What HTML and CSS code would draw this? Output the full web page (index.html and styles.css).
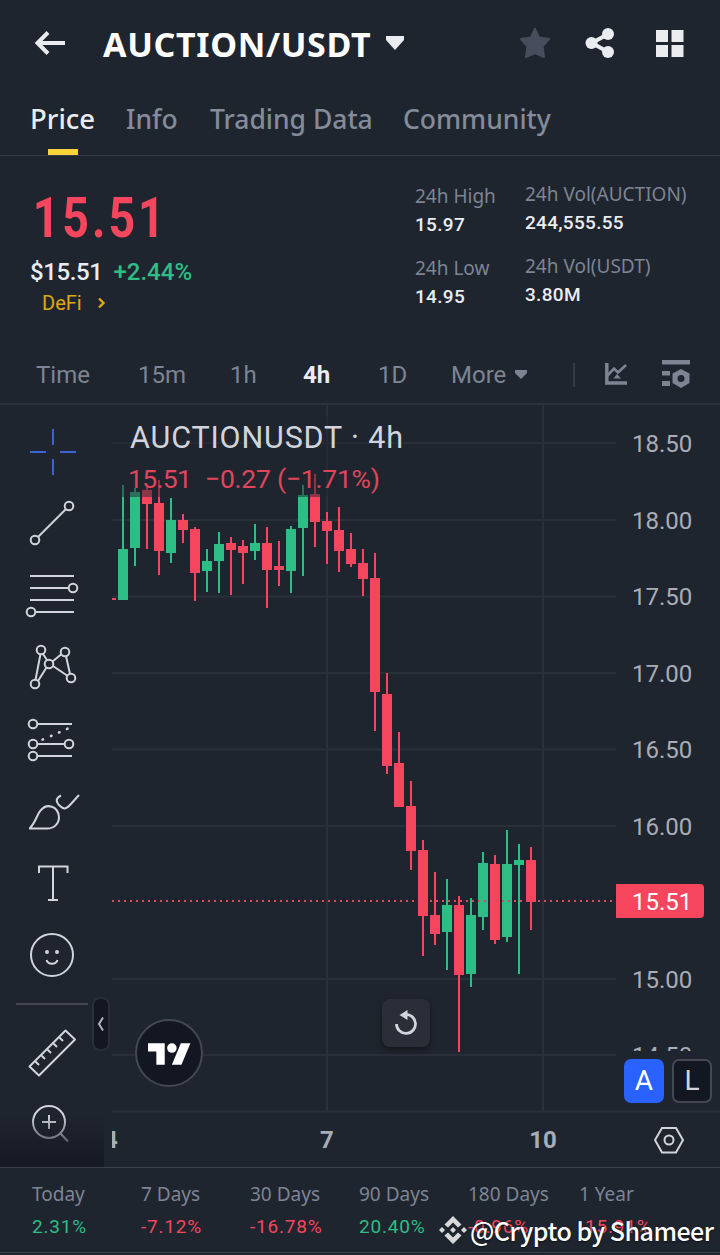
FILE: index.html
```html
<!DOCTYPE html>
<html lang="en">
    <head>
        <meta charset="utf-8">
        <meta name="viewport" content="width=device-width, initial-scale=1.0">
        <title>AUCTION/USDT</title>
        <link rel="stylesheet" href="styles.css">
    </head>
    <body>

        <header class="topbar">
            <svg class="back" width="32" height="26" viewBox="0 0 32 26"><path d="M31 13H4M14 2.500L3.500 13L14 23.500" fill="none" stroke="#eaecef" stroke-width="4"/></svg>
            <h1 class="pair">AUCTION/USDT</h1>
            <svg class="caret" width="20" height="16" viewBox="0 0 20 16"><path d="M1 1H19V5L10 15L1 5Z" fill="#eaecef"/></svg>
            <div class="actions">
                <svg width="32" height="32" viewBox="0 0 32 32"><path d="M16 2L20 10.500L30 12L23.500 19.500L25 30L16 26L7 30L8.500 19.500L2 12L12 10.500Z" fill="#474d5c" stroke="#474d5c" stroke-width="2" stroke-linejoin="round"/></svg>
                <svg width="32" height="32" viewBox="0 0 32 32"><path d="M23 7L7 16L23 25" fill="none" stroke="#eaecef" stroke-width="4"/><circle cx="23" cy="7" r="6" fill="#eaecef"/><circle cx="6.500" cy="16" r="6" fill="#eaecef"/><circle cx="23" cy="25" r="6" fill="#eaecef"/></svg>
                <svg width="28" height="28" viewBox="0 0 28 28"><path d="M0 1H12V13H0ZM15.500 1H27.500V13H15.500ZM0 16H12V28H0ZM15.500 16H27.500V28H15.500Z" fill="#eaecef"/></svg>
            </div>
        </header>

        <nav class="tabs">
            <a class="tab active">Price</a>
            <a class="tab">Info</a>
            <a class="tab">Trading Data</a>
            <a class="tab">Community</a>
        </nav>

        <section class="ticker">
            <div class="last">
                <div class="price">15.51</div>
                <div class="fiat"><span>$15.51</span><span class="change up">+2.44%</span></div>
                <div class="tag">DeFi <svg width="8" height="12" viewBox="0 0 8 12"><path d="M1 1.500L5.500 6L1 10.500" fill="none" stroke="#e0a90b" stroke-width="2.400"/></svg></div>
            </div>
            <dl class="stats">
                <dt>24h High</dt><dd>15.97</dd>
                <dt>24h Low</dt><dd>14.95</dd>
            </dl>
            <dl class="stats volume">
                <dt>24h Vol(AUCTION)</dt><dd>244,555.55</dd>
                <dt>24h Vol(USDT)</dt><dd>3.80M</dd>
            </dl>
        </section>

        <nav class="intervals">
            <span>Time</span>
            <span>15m</span>
            <span>1h</span>
            <span class="selected">4h</span>
            <span>1D</span>
            <span>More <svg width="14" height="11" viewBox="0 0 14 11"><path d="M1 0H13V3L7 9L1 3Z" fill="#7d8493"/></svg></span>
            <i class="split"></i>
            <svg width="24" height="24" viewBox="0 0 24 24" fill="none" stroke="#7d8493" stroke-width="3.500"><path d="M2.800 0V20H23"/><path d="M3 13L10 5.500L14 9.500L22 2" stroke-width="2.600"/><path d="M9.500 15.500L13 11L17 15.500Z" fill="#7d8493" stroke="none"/></svg>
            <svg width="30" height="30" viewBox="1 1 30 30" fill="#7d8493"><path d="M1 1H29V5.500H1ZM1 12H9V16.500H1ZM1 22H9V27H1Z"/><path fill-rule="evenodd" d="M20 10L28.500 14.500V24L20 29L11.500 24V14.500ZM20 16A3.500 3.500 0 1 0 20 23A3.500 3.500 0 1 0 20 16Z"/></svg>
        </nav>

        <main class="chart">
            <aside class="tools">
                <!-- crosshair -->
                <svg class="tool cross" viewBox="0 0 104 72"><path d="M30 36H46M60 36H76M53 13V29M53 43V59"/></svg>
                <!-- trend line -->
                <svg class="tool" viewBox="0 0 104 72"><circle cx="69" cy="18" r="4.300"/><circle cx="35" cy="52" r="4.300"/><path d="M38 49L66 21"/></svg>
                <!-- fib retracement -->
                <svg class="tool" viewBox="0 0 104 72"><path d="M30 16H74M30 28H68M30 40H74M36 52H74"/><circle cx="73" cy="28" r="4.300"/><circle cx="31" cy="52" r="4.300"/></svg>
                <!-- xabcd pattern -->
                <svg class="tool" viewBox="0 0 104 72"><path d="M35.500 48L40.500 22M43 22L47 28M52.500 29.500L61 22.500M66 24L70 42M53 34L67 43.500M38 49L46.500 35.500"/><circle cx="41" cy="18" r="4.300"/><circle cx="35" cy="52" r="4.300"/><circle cx="49" cy="32" r="4.300"/><circle cx="65" cy="20" r="4.300"/><circle cx="71" cy="46" r="4.300"/></svg>
                <!-- forecast -->
                <svg class="tool" viewBox="0 0 104 72"><path d="M38 20H72M38 40H64M38 52H72"/><circle cx="33" cy="20" r="4.300"/><circle cx="33" cy="40" r="4.300"/><circle cx="69" cy="40" r="4.300"/><circle cx="33" cy="52" r="4.300"/><path class="dots" d="M42.500 35.600L43 35.400M51 32L51.500 31.800M59 28.500L59.500 28.300M67 24.900L67.500 24.700"/></svg>
                <!-- brush -->
                <svg class="tool" viewBox="0 0 104 72"><path d="M30 52C36 46 37 38 41 34C47 27 58 30 59 41C59 48 54 52.500 47 52.500H29"/><path d="M61 19.500C55.500 22 55.500 26 60 30C64 34 67 32.500 70 29L79 19"/></svg>
                <!-- text -->
                <svg class="tool" viewBox="0 0 104 72"><path d="M39 25V18.500H67.500V25M53 18.500V52M48 52H58"/></svg>
                <!-- emoji -->
                <svg class="tool" viewBox="0 0 104 72"><circle cx="52" cy="35" r="21"/><path d="M46.500 40C48 45 56 45 57.500 40"/><circle class="eye" cx="47" cy="32" r="2"/><circle class="eye" cx="57" cy="32" r="2"/></svg>
                <hr class="rule">
                <!-- ruler -->
                <svg class="tool" viewBox="0 0 104 72"><path stroke-linejoin="round" d="M65.500 13.500L75 22.500L39 58.500L29.500 49.500ZM35 44L39 48M41 38L45 42M47 32L51 36M53 26L57 30M59 20L63 24"/></svg>
                <!-- zoom in -->
                <svg class="tool" viewBox="0 0 104 72"><circle cx="49" cy="33" r="16"/><path d="M42 33H56M49 26V40M60.500 44.500L68 52.500"/></svg>
                <div class="fade"></div>
            </aside>

            <div class="plot">
                <svg class="canvas" width="616" height="762" viewBox="104 405 616 762">
                    <defs>
                        <clipPath id="priceScale"><path d="M616 405H720V1051H616Z"/></clipPath>
                        <clipPath id="timeScale"><path d="M112 1112H640V1167H112Z"/></clipPath>
                    </defs>

                    <path class="grid" d="M112 443H616M112 520H616M112 596.500H616M112 673H616M112 749.500H616M112 826H616M112 979H616M112 1055H616M327 405V1111M543 405V1111M112 1111.500H720"/>

                    <path class="wick up" d="M123 485V600M135 488V566M171 498V563M207 549V592M219 532V593M255 524V560M291 526V593M303 485V576M447 879V970M471 898V987M483 852V930M507 830V942M519 844V974"/>
                    <path class="wick down" d="M147 486V549M159 480V575M183 514V543M195 527V601M231 537V595M243 540V584M267 527V608M279 541V586M315 474V547M327 512V564M339 507V572M351 533V567M363 549V596M375 553V731M387 673V774M399 732V807M411 781V870M423 840V956M435 872V945M459 896V1052M495 855V944M531 847V930"/>
                    <path class="body up" d="M123 549V600M135 492V548M171 520V553M207 561V571M219 544V561M255 543V551M291 529V571M303 495V528M447 905V932M471 915V974M483 863V917M507 864V937M519 860V865"/>
                    <path class="body down" d="M147 490V504M159 503V551M183 520V530M195 529V573M231 543V550M243 546V553M267 543V570M279 566V570M315 494V522M327 521V531M339 530V551M351 549V564M363 563V579M375 578V692M387 694V766M399 763V807M411 806V851M423 850V916M435 915V934M459 905V975M495 864V940M531 860V902"/>
                    <path d="M112 598H116V600H112Z" fill="#f6465d"/>

                    <path class="lastline" d="M112 901H616"/>

                    <path class="legendbg" d="M113 415H404V461H386V497H113Z"/>
                    <text class="symbol" x="130" y="447.500" textLength="273">AUCTIONUSDT · 4h</text>
                    <text class="quote" x="128" y="488" textLength="64">15.51</text>
                    <text class="quote" x="205" y="488" textLength="175">−0.27 (−1.71%)</text>

                    <g class="scale" clip-path="url(#priceScale)">
                        <text x="632" y="452">18.50</text>
                        <text x="632" y="529">18.00</text>
                        <text x="632" y="605">17.50</text>
                        <text x="632" y="682">17.00</text>
                        <text x="632" y="758">16.50</text>
                        <text x="632" y="835">16.00</text>
                        <text x="632" y="988">15.00</text>
                        <text x="632" y="1064">14.50</text>
                    </g>
                    <path d="M616 884H700Q704 884 704 888V914Q704 918 700 918H616Z" fill="#f6465d"/>
                    <text class="scale now" x="632" y="910">15.51</text>

                    <g class="scale time" clip-path="url(#timeScale)">
                        <text x="111" y="1148">4</text>
                        <text x="327" y="1148">7</text>
                        <text x="543" y="1148">10</text>
                    </g>
                    <path d="M655 1140L662 1128H676L683 1140L676 1152.500H662Z" fill="none" stroke="#d1d4dc" stroke-width="2"/>
                    <circle cx="669" cy="1140" r="4.500" fill="none" stroke="#d1d4dc" stroke-width="2"/>
                </svg>

                <button class="collapse"><svg width="8" height="16" viewBox="0 0 8 16"><path d="M6 1.500L2 8L6 14.500" fill="none" stroke="#b2b5be" stroke-width="2"/></svg></button>
                <div class="tvlogo"><svg width="43" height="26" viewBox="0 3 36 20" fill="#fff"><path d="M14 22H7V11H0V4h14v18zM28 22h-8l7.500-18h8L28 22z"/><circle cx="20" cy="8" r="4"/></svg></div>
                <button class="reset"><svg width="24" height="26" viewBox="0 0 24 26"><path d="M2.500 14A9.500 9.500 0 1 0 11 4.500" fill="none" stroke="#d1d4dc" stroke-width="2.800"/><path d="M5.500 5L13.500 0V10Z" fill="#d1d4dc"/></svg></button>
                <div class="modes"><button class="mode on">A</button><button class="mode">L</button></div>
            </div>
        </main>

        <footer class="periods">
            <div>Today<b class="up">2.31%</b></div>
            <div>7 Days<b class="down">-7.12%</b></div>
            <div>30 Days<b class="down">-16.78%</b></div>
            <div>90 Days<b class="up">20.40%</b></div>
            <div>180 Days<b class="down">-0.96%</b></div>
            <div>1 Year<b class="down">-15.91%</b></div>
            <div class="credit">
                <svg width="28" height="28" viewBox="0 0 28 28" fill="#d9d9d9"><path d="M14 0L22.500 8.500L19 11.500L14 6.500L9 11.500L5.500 8.500ZM14 28L22.500 19.500L19 16.500L14 21.500L9 16.500L5.500 19.500ZM3 11L6 14L3 17L0 14ZM25 11L28 14L25 17L22 14ZM14 11L17 14L14 17L11 14Z"/></svg>
                <span>@Crypto by Shameer</span>
            </div>
        </footer>

    </body>
</html>
```

FILE: styles.css
```css
*
{
    box-sizing: border-box;
}

body
{
    margin: 0;
    width: 720px;
    height: 1255px;
    overflow: hidden;
    background: #1f252f;
    color: #eaecef;
    font-family: "Noto Sans", "Open Sans", sans-serif;
}

svg
{
    display: block;
}

button
{
    padding: 0;
    border: 0;
    font-family: Roboto, sans-serif;
}

.up
{
    color: #2ebd85;
}
.down
{
    color: #f6465d;
}

/* header */
.topbar
{
    display: flex;
    align-items: center;
    height: 88px;
    padding: 0 36px 2px 34px;
}
.pair
{
    width: 268px;
    margin: 2px 0 0 37px;
    font-size: 34px;
    line-height: 48px;
    font-weight: 700;
    letter-spacing: .65px;
    color: #fff;
    white-space: nowrap;
}
.caret
{
    margin-left: 14px;
}
.actions
{
    display: flex;
    align-items: center;
    margin-left: auto;
}
.actions svg:nth-child(2)
{
    margin: 0 39px 0 34px;
}

.tabs
{
    display: grid;
    grid-template-columns: 96px 84px 193px auto;
    height: 68px;
    padding-left: 30px;
    border-bottom: 1px solid #353c48;
    color: #848b99;
    font-size: 26.5px;
    font-weight: 500;
    line-height: 62px;
}
.tab
{
    position: relative;
    white-space: nowrap;
}
.active
{
    color: #eaecef;
    font-size: 27.5px;
}
.active:after
{
    content: "";
    position: absolute;
    left: 18px;
    bottom: 0;
    width: 30px;
    height: 6px;
    background: #f8d33a;
}

/* last price and 24h stats */
.ticker
{
    display: grid;
    grid-template-columns: 384px 110px auto;
    height: 189px;
    padding: 26px 0 0 31px;
}
.last
{
    padding-top: 6px;
    font-family: Roboto, sans-serif;
}
.price
{
    height: 60px;
    padding-left: 2px;
    font-size: 56px;
    line-height: 60px;
    font-weight: 700;
    letter-spacing: 3.6px;
    color: #f6465d;
    transform: scaleX(.83);
    transform-origin: left;
}
.fiat
{
    display: flex;
    margin: 10px 0 0 -1px;
    font-size: 24px;
    line-height: 28px;
    font-weight: 500;
    letter-spacing: -.4px;
}
.change
{
    margin-left: 11px;
    letter-spacing: 0;
}
.tag
{
    display: flex;
    align-items: center;
    gap: 16px;
    padding-left: 11px;
    font-size: 20px;
    line-height: 34px;
    color: #e0a90b;
}
.stats
{
    margin: 0;
    font-size: 19px;
    line-height: 28px;
    color: #7d8493;
    white-space: nowrap;
}
.stats dd
{
    margin: 1px 0 15px;
    font-family: Roboto, sans-serif;
    font-weight: 500;
    letter-spacing: .3px;
    color: #eaecef;
}
.volume
{
    margin-top: -2px;
}

.intervals
{
    display: grid;
    grid-template-columns: 102px 92px 73px 75px 73px 122px 31px 58px auto;
    align-items: center;
    height: 60px;
    padding: 2px 0 0 36px;
    border-bottom: 2px solid #2a313c;
    font: 24px/56px Roboto, sans-serif;
    color: #7d8493;
}
.intervals span
{
    display: flex;
    align-items: center;
    gap: 8px;
}
.intervals .selected
{
    font-weight: 700;
    color: #eaecef;
}
.split
{
    width: 2px;
    height: 24px;
    background: #353c48;
}

/* chart */
.chart
{
    display: flex;
    height: 762px;
}
.tools
{
    position: relative;
    width: 104px;
    padding-top: 11px;
}
.tool
{
    width: 104px;
    height: 72px;
    fill: none;
    stroke: #d1d4dc;
    stroke-width: 2;
}
.cross
{
    stroke: #3a63d8;
}
.dots
{
    stroke-width: 2.6;
    stroke-linecap: round;
}
.eye
{
    fill: #d1d4dc;
    stroke: none;
}
.rule
{
    width: 72px;
    height: 2px;
    margin: 11px 16px 12px;
    border: 0;
    background: #434853;
}
.fade
{
    position: absolute;
    left: 0;
    bottom: 0;
    width: 104px;
    height: 52px;
    background: linear-gradient(rgba(22,26,37,0), #161a25 85%);
}
.plot
{
    position: relative;
    width: 616px;
}
.canvas
{
    font-family: Roboto, sans-serif;
}
.grid
{
    stroke: #2a303a;
    stroke-width: 2;
}
.wick
{
    stroke-width: 2;
}
.body
{
    stroke-width: 10;
}
.wick.up, .body.up
{
    stroke: #2ebd85;
}
.wick.down, .body.down
{
    stroke: #f6465d;
}
.lastline
{
    stroke: #e0495f;
    stroke-width: 2;
    stroke-dasharray: 2 4;
}
.legendbg
{
    fill: #1f252f;
    opacity: .5;
}
.symbol
{
    font-size: 30.5px;
    fill: #d1d4dc;
}
.quote
{
    font-size: 26.5px;
    fill: #e0455c;
}
.scale
{
    font-size: 24px;
    fill: #a9adb7;
}
.now
{
    fill: #fff;
}
.time
{
    font-weight: 700;
    text-anchor: middle;
}

/* things over the chart */
.collapse
{
    position: absolute;
    left: -12px;
    top: 592px;
    display: flex;
    align-items: center;
    justify-content: center;
    width: 18px;
    height: 54px;
    border: 2px solid #2a2e39;
    border-radius: 8px;
    background: #131722;
}
.tvlogo
{
    position: absolute;
    left: 31px;
    top: 614px;
    display: flex;
    align-items: center;
    justify-content: center;
    width: 68px;
    height: 68px;
    padding-top: 2px;
    border: 2px solid #434853;
    border-radius: 50%;
    background: #131722;
}
.reset
{
    position: absolute;
    left: 278px;
    top: 594px;
    display: flex;
    align-items: center;
    justify-content: center;
    width: 48px;
    height: 48px;
    border-radius: 8px;
    background: #2a2e39;
    box-shadow: 0 3px 6px rgba(0,0,0,.4);
}
.modes
{
    position: absolute;
    left: 520px;
    top: 654px;
    display: flex;
    gap: 8px;
}
.mode
{
    width: 40px;
    height: 44px;
    border: 2px solid #434853;
    border-radius: 7px;
    background: #131722;
    color: #d1d4dc;
    font-size: 28px;
    line-height: 38px;
}
.mode.on
{
    border-color: #2962ff;
    background: #2962ff;
    color: #fff;
}

/* performance by period */
.periods
{
    position: relative;
    display: grid;
    grid-template-columns: 109px 109px 109px 109px 111px auto;
    height: 86px;
    padding: 12px 0 0 32px;
    border-top: 1px solid #3a404b;
    border-bottom: 1px solid #3a404b;
    font-size: 19px;
    line-height: 28px;
    color: #7d8493;
    white-space: nowrap;
}
.periods b
{
    display: block;
    margin-top: 5px;
    font-family: Roboto, sans-serif;
    font-weight: 400;
    letter-spacing: .8px;
}
.credit
{
    position: absolute;
    left: 439px;
    top: 43px;
    display: flex;
    align-items: center;
    gap: 3px;
    color: #fff;
    font: 500 25px/38px "Noto Sans CJK SC", sans-serif;
    letter-spacing: -.5px;
    text-shadow: 0 1px 2px rgba(0,0,0,.6);
}
```
